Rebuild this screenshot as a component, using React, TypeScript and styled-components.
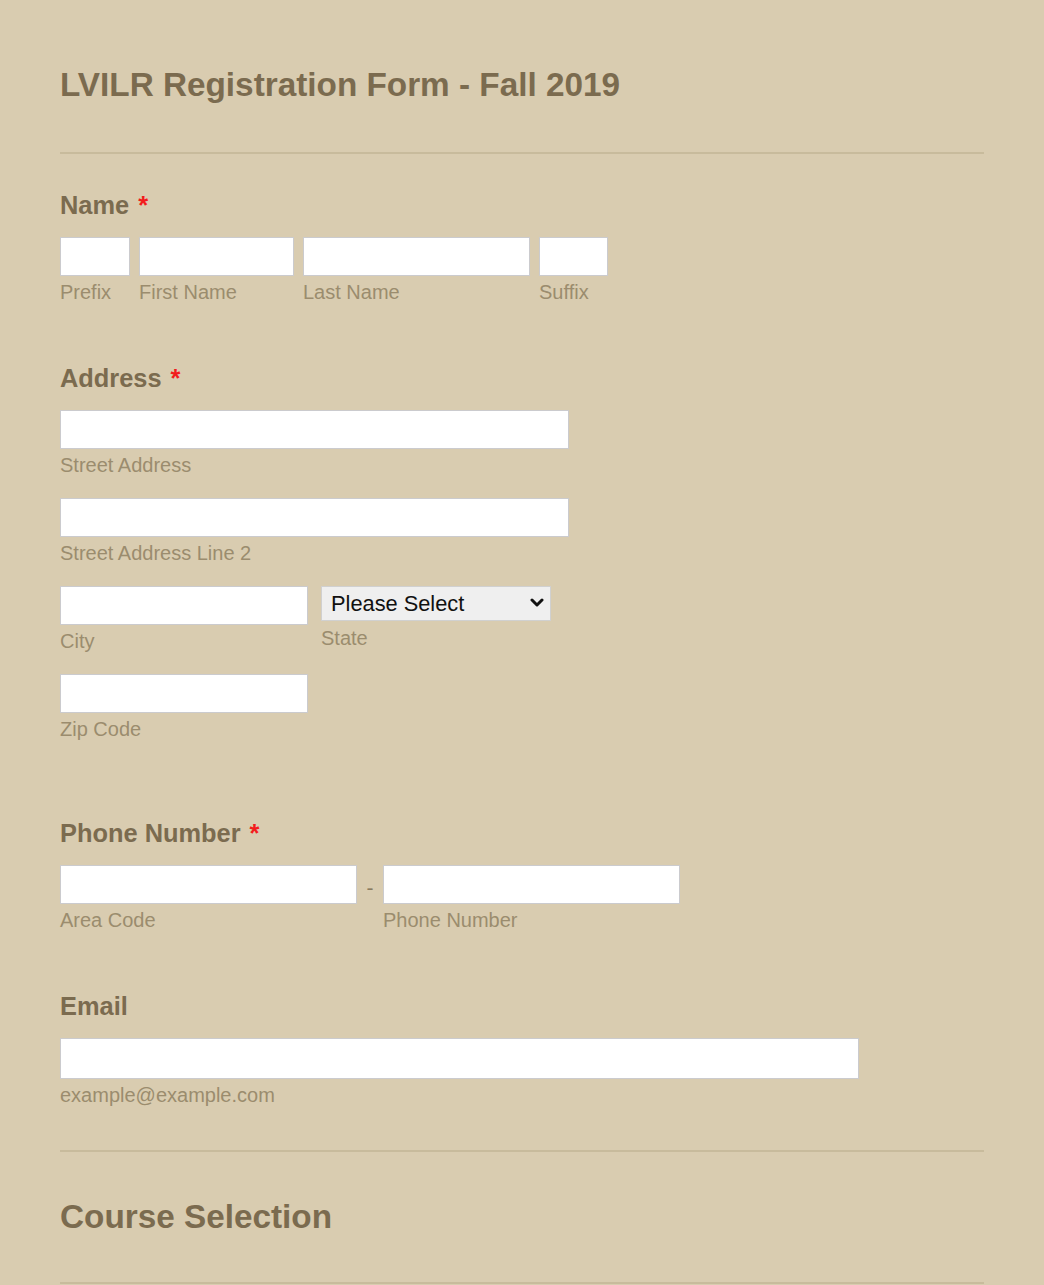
import React from "react";
import styled, { createGlobalStyle } from "styled-components";

const GlobalStyle = createGlobalStyle`
  html, body {
    margin: 0;
    padding: 0;
    background: #d9ccb0;
  }
  body {
    font-family: "Liberation Sans", Arial, sans-serif;
  }
`;

const Page = styled.div`
  padding: 0 60px;
  min-height: 1285px;
  box-sizing: border-box;
`;

const Header = styled.div`
  padding: 65px 0 47px;
  border-bottom: 2px solid #c8bb9c;
`;

const Title = styled.h1`
  margin: 0;
  font-size: 33.3px;
  line-height: 40px;
  font-weight: 700;
  color: #7b6b4f;
`;

const Section = styled.div<{ $top: number; $bottom?: number }>`
  margin-top: ${(p) => p.$top}px;
  padding-bottom: ${(p) => p.$bottom ?? 0}px;
`;

const Label = styled.div`
  font-size: 25.4px;
  line-height: 30px;
  font-weight: 700;
  color: #7b6b4f;
  margin-bottom: 17px;
`;

const Req = styled.span`
  color: #f21c1c;
  margin-left: 9px;
`;

const Row = styled.div<{ $gap?: number }>`
  display: flex;
  align-items: flex-start;
  gap: ${(p) => p.$gap ?? 9}px;
`;

const Stack = styled.div`
  display: flex;
  flex-direction: column;
  gap: 21px;
`;

const Field = styled.div`
  display: flex;
  flex-direction: column;
`;

const Input = styled.input<{ $w: number; $h?: number }>`
  box-sizing: border-box;
  width: ${(p) => p.$w}px;
  height: ${(p) => p.$h ?? 39}px;
  margin: 0;
  padding: 0 8px;
  background: #fff;
  border: 1px solid #cbcbce;
  border-radius: 0;
  outline: none;
  font-family: inherit;
  font-size: 18px;
`;

const SelectWrap = styled.div`
  position: relative;
  width: 230px;
  height: 35px;
`;

const Select = styled.select`
  appearance: none;
  -webkit-appearance: none;
  box-sizing: border-box;
  width: 100%;
  height: 100%;
  margin: 0;
  padding: 0 30px 0 9px;
  background: #efefef;
  border: 1px solid #d0d0d0;
  border-radius: 0;
  color: #111;
  font-family: "Liberation Sans", Arial, sans-serif;
  font-size: 21.8px;
  outline: none;
`;

const Chevron = styled.svg`
  position: absolute;
  right: 7px;
  top: 12px;
  width: 14px;
  height: 10px;
  pointer-events: none;
`;

const Sub = styled.div<{ $gap?: number }>`
  margin-top: ${(p) => p.$gap ?? 4}px;
  font-size: 20px;
  line-height: 24px;
  color: #9b8c6e;
  white-space: nowrap;
`;

const Dash = styled.div`
  width: 26px;
  height: 39px;
  line-height: 46px;
  text-align: center;
  font-size: 21px;
  color: #8a7b5f;
`;

const Divider = styled.div<{ $top: number }>`
  margin-top: ${(p) => p.$top}px;
  border-top: 2px solid #c8bb9c;
`;

const SectionTitle = styled.h2`
  margin: 45px 0;
  font-size: 33.3px;
  line-height: 40px;
  font-weight: 700;
  color: #7b6b4f;
`;

const nameParts = [
  { label: "Prefix", w: 70 },
  { label: "First Name", w: 155 },
  { label: "Last Name", w: 227 },
  { label: "Suffix", w: 69 },
];

const App = () => {
  return (
    <>
      <GlobalStyle />
      <Page>
        <Header>
          <Title>LVILR Registration Form - Fall 2019</Title>
        </Header>

        <Section $top={36}>
          <Label>
            Name<Req>*</Req>
          </Label>
          <Row>
            {nameParts.map((p) => (
              <Field key={p.label}>
                <Input $w={p.w} />
                <Sub>{p.label}</Sub>
              </Field>
            ))}
          </Row>
        </Section>

        <Section $top={59} $bottom={18}>
          <Label>
            Address<Req>*</Req>
          </Label>
          <Stack>
            <Field>
              <Input $w={509} />
              <Sub>Street Address</Sub>
            </Field>
            <Field>
              <Input $w={509} />
              <Sub>Street Address Line 2</Sub>
            </Field>
            <Row $gap={13}>
              <Field>
                <Input $w={248} />
                <Sub>City</Sub>
              </Field>
              <Field>
                <SelectWrap>
                  <Select defaultValue="">
                    <option value="">Please Select</option>
                  </Select>
                  <Chevron viewBox="0 0 14 10">
                    <path
                      d="M2 2 L7 7 L12 2"
                      fill="none"
                      stroke="#111"
                      strokeWidth="3"
                      strokeLinecap="round"
                      strokeLinejoin="round"
                    />
                  </Chevron>
                </SelectWrap>
                <Sub $gap={5}>State</Sub>
              </Field>
            </Row>
            <Field>
              <Input $w={248} />
              <Sub>Zip Code</Sub>
            </Field>
          </Stack>
        </Section>

        <Section $top={59}>
          <Label>
            Phone Number<Req>*</Req>
          </Label>
          <Row $gap={0}>
            <Field>
              <Input $w={297} />
              <Sub>Area Code</Sub>
            </Field>
            <Dash>-</Dash>
            <Field>
              <Input $w={297} />
              <Sub>Phone Number</Sub>
            </Field>
          </Row>
        </Section>

        <Section $top={59}>
          <Label>Email</Label>
          <Field>
            <Input $w={799} $h={41} />
            <Sub>example@example.com</Sub>
          </Field>
        </Section>

        <Divider $top={43} />
        <SectionTitle>Course Selection</SectionTitle>
        <Divider $top={0} />
      </Page>
    </>
  );
};

export default App;
